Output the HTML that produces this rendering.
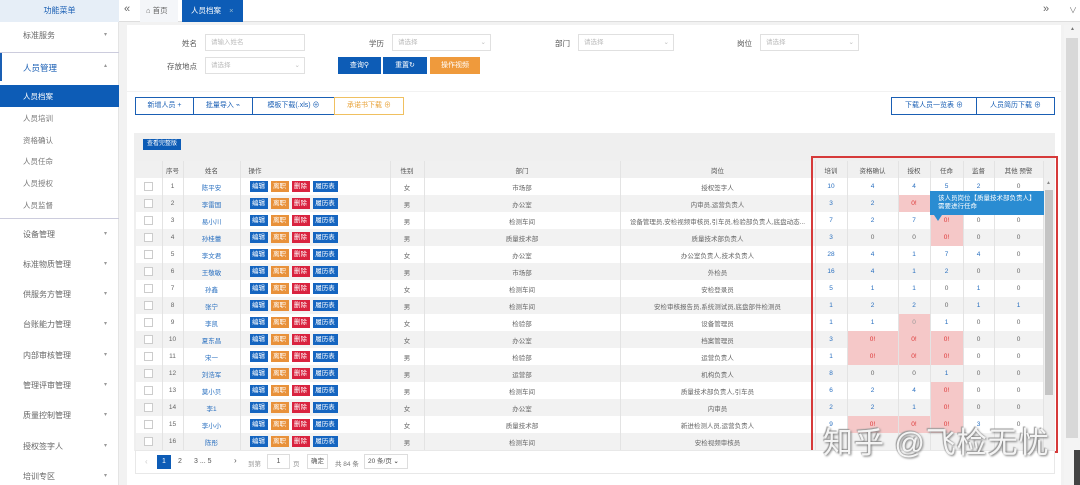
<!DOCTYPE html>
<html><head><meta charset="utf-8">
<style>
*{box-sizing:border-box;margin:0;padding:0}
body{width:1080px;height:485px;overflow:hidden;background:#fff;font-family:"Liberation Sans","Noto Sans CJK SC",sans-serif;position:relative;color:#555}
.a{position:absolute}
.side{left:0;top:0;width:119px;height:485px;background:#fff;border-right:1px solid #e4e4e4}
.sh{left:0;top:0;width:119px;height:22px;background:#e6eef7;color:#1a5fb4;font-size:8px;text-align:center;line-height:22px}
.mi{left:23px;font-size:8px;color:#666}
.car{left:104px;font-size:6px;color:#999}
.si{left:23px;font-size:7.5px;color:#777}
.gray{left:119px;top:22px;width:961px;height:463px;background:#f2f2f2}
.tabbar{left:119px;top:0;width:961px;height:22px;background:#fff;border-bottom:1px solid #ddd}
.inp{height:17px;border:1px solid #e0e0e0;background:#fff;font-size:6.5px;color:#bbb;padding-left:5px;line-height:15px}
.lbl{font-size:7.5px;color:#555;text-align:right}
.btn{height:17px;font-size:7px;color:#fff;text-align:center;line-height:17px}
.ob{height:18px;border:1px solid #1a5fb4;background:#fff;color:#1a5fb4;font-size:7px;text-align:center;line-height:16px}
table{border-collapse:collapse;table-layout:fixed;font-size:6.5px}
td{height:17px;text-align:center;color:#666;border-right:1px solid #e3e3e3;white-space:nowrap;overflow:hidden;padding:0}
tr:nth-child(even) td{background:#f2f2f2}
tr:nth-child(odd) td{background:#fff}
tr.h td{background:#f0f0f0;color:#555}
.cb{display:inline-block;width:9px;height:9px;border:1px solid #ccc;background:#fff;vertical-align:middle}
.nm{color:#2a70c0}
.bl{color:#2a70c0}
td.pk{background:#f5c8c8 !important;color:#d33}
.ops{text-align:left;padding-left:9px}
.ops i{font-style:normal;display:inline-block;height:11px;line-height:11px;color:#fff;font-size:6.5px;width:18px;text-align:center;margin-right:3px;vertical-align:middle}
.ops i:last-child{width:25px}
.e{background:#1565c0}.l{background:#e8913a}.d{background:#d9233f}
</style></head><body>
<div class="a side"></div>
<div class="a sh">功能菜单</div>
<div class="a mi" style="top:30px">标准服务</div><div class="a car" style="top:31px">▾</div>
<div class="a" style="left:0;top:52px;width:119px;height:1px;background:#ccd"></div>
<div class="a" style="left:0;top:53px;width:2px;height:28px;background:#1a5fb4"></div>
<div class="a mi" style="top:62px;color:#1a5fb4;font-size:8.5px">人员管理</div><div class="a car" style="top:62px">▴</div>
<div class="a" style="left:0;top:85px;width:119px;height:22px;background:#0d5cb6"></div>
<div class="a si" style="top:91px;color:#fff">人员档案</div>
<div class="a si" style="top:113px">人员培训</div>
<div class="a si" style="top:135px">资格确认</div>
<div class="a si" style="top:156px">人员任命</div>
<div class="a si" style="top:178px">人员授权</div>
<div class="a si" style="top:200px">人员监督</div>
<div class="a" style="left:0;top:218px;width:119px;height:1px;background:#ccd"></div>
<div class="a mi" style="top:229px">设备管理</div><div class="a car" style="top:230px">▾</div>
<div class="a mi" style="top:259px">标准物质管理</div><div class="a car" style="top:260px">▾</div>
<div class="a mi" style="top:289px">供服务方管理</div><div class="a car" style="top:290px">▾</div>
<div class="a mi" style="top:319px">台账能力管理</div><div class="a car" style="top:320px">▾</div>
<div class="a mi" style="top:350px">内部审核管理</div><div class="a car" style="top:351px">▾</div>
<div class="a mi" style="top:380px">管理评审管理</div><div class="a car" style="top:381px">▾</div>
<div class="a mi" style="top:410px">质量控制管理</div><div class="a car" style="top:411px">▾</div>
<div class="a mi" style="top:441px">授权签字人</div><div class="a car" style="top:442px">▾</div>
<div class="a mi" style="top:471px">培训专区</div><div class="a car" style="top:472px">▾</div>

<div class="a gray"></div>
<div class="a tabbar"></div>
<div class="a" style="left:124px;top:3px;font-size:11px;color:#666">«</div>
<div class="a" style="left:140px;top:0;width:38px;height:22px;background:#f4f6f9;font-size:7.5px;color:#666;line-height:22px;padding-left:6px">⌂ 首页</div>
<div class="a" style="left:182px;top:0;width:61px;height:22px;background:#0d5cb6;font-size:7.5px;color:#fff;line-height:22px;padding-left:9px">人员档案 <span style="color:#9bc;margin-left:6px">×</span></div>
<div class="a" style="left:1043px;top:3px;font-size:11px;color:#666">»</div>
<div class="a" style="left:1069px;top:5px;font-size:8px;color:#777">∨</div>

<div class="a" style="left:127px;top:25px;width:934px;height:66px;background:#fff"></div>
<div class="a lbl" style="left:160px;top:38px;width:37px">姓名</div>
<div class="a inp" style="left:205px;top:34px;width:100px">请输入姓名</div>
<div class="a lbl" style="left:350px;top:38px;width:34px">学历</div>
<div class="a inp" style="left:392px;top:34px;width:99px">请选择<span style="float:right;margin-right:4px">⌄</span></div>
<div class="a lbl" style="left:535px;top:38px;width:35px">部门</div>
<div class="a inp" style="left:578px;top:34px;width:96px">请选择<span style="float:right;margin-right:4px">⌄</span></div>
<div class="a lbl" style="left:715px;top:38px;width:37px">岗位</div>
<div class="a inp" style="left:760px;top:34px;width:99px">请选择<span style="float:right;margin-right:4px">⌄</span></div>
<div class="a lbl" style="left:150px;top:61px;width:47px">存放地点</div>
<div class="a inp" style="left:205px;top:57px;width:100px">请选择<span style="float:right;margin-right:4px">⌄</span></div>
<div class="a btn" style="left:338px;top:57px;width:43px;background:#0d5cb6">查询⚲</div>
<div class="a btn" style="left:383px;top:57px;width:44px;background:#0d5cb6">重置↻</div>
<div class="a btn" style="left:430px;top:57px;width:50px;background:#ef9a3c">操作视频</div>

<div class="a" style="left:127px;top:92px;width:934px;height:393px;background:#fff"></div>
<div class="a ob" style="left:135px;top:97px;width:59px">新增人员 +</div>
<div class="a ob" style="left:193px;top:97px;width:60px">批量导入 ⌁</div>
<div class="a ob" style="left:252px;top:97px;width:83px">模板下载(.xls) ⊕</div>
<div class="a ob" style="left:334px;top:97px;width:70px;border-color:#f0c060;color:#e8a33a">承诺书下载 ⊕</div>
<div class="a ob" style="left:891px;top:97px;width:86px">下载人员一览表 ⊕</div>
<div class="a ob" style="left:976px;top:97px;width:79px">人员简历下载 ⊕</div>

<div class="a" style="left:134px;top:133px;width:921px;height:318px;background:#efefef"></div>
<div class="a" style="left:143px;top:139px;width:38px;height:11px;background:#0d5cb6;color:#fff;font-size:6px;text-align:center;line-height:11px">查看完整版</div>

<div class="a" style="left:136px;top:161px;width:908px;height:289px;overflow:hidden">
<table style="width:907px">
<colgroup><col style="width:26px"><col style="width:21px"><col style="width:57px"><col style="width:150px"><col style="width:34px"><col style="width:196px"><col style="width:195px"><col style="width:32px"><col style="width:51px"><col style="width:32px"><col style="width:33px"><col style="width:31px"><col style="width:49px"></colgroup>
<tr class="h"><td></td><td>序号</td><td>姓名</td><td style="text-align:left;padding-left:8px">操作</td><td>性别</td><td>部门</td><td>岗位</td><td>培训</td><td>资格确认</td><td>授权</td><td>任命</td><td>监督</td><td>其他 预警</td></tr>
</table>
<table style="width:907px" id="tb">
<colgroup><col style="width:26px"><col style="width:21px"><col style="width:57px"><col style="width:150px"><col style="width:34px"><col style="width:196px"><col style="width:195px"><col style="width:32px"><col style="width:51px"><col style="width:32px"><col style="width:33px"><col style="width:31px"><col style="width:49px"></colgroup>
<tr><td><span class="cb"></span></td><td>1</td><td class="nm">陈平安</td><td class="ops"><i class="e">编辑</i><i class="l">离职</i><i class="d">删除</i><i class="e">履历表</i></td><td>女</td><td>市场部</td><td>授权签字人</td><td class="bl">10</td><td class="bl">4</td><td class="bl">4</td><td class="bl">5</td><td class="bl">2</td><td>0</td></tr>
<tr><td><span class="cb"></span></td><td>2</td><td class="nm">李雷国</td><td class="ops"><i class="e">编辑</i><i class="l">离职</i><i class="d">删除</i><i class="e">履历表</i></td><td>男</td><td>办公室</td><td>内审员,运营负责人</td><td class="bl">3</td><td class="bl">2</td><td class="pk">0!</td><td class="pk">0!</td><td>0</td><td>0</td></tr>
<tr><td><span class="cb"></span></td><td>3</td><td class="nm">易小川</td><td class="ops"><i class="e">编辑</i><i class="l">离职</i><i class="d">删除</i><i class="e">履历表</i></td><td>男</td><td>检测车间</td><td>设备管理员,安检视频审核员,引车员,检验部负责人,底盘动态...</td><td class="bl">7</td><td class="bl">2</td><td class="bl">7</td><td class="pk">0!</td><td>0</td><td>0</td></tr>
<tr><td><span class="cb"></span></td><td>4</td><td class="nm">孙桂蕾</td><td class="ops"><i class="e">编辑</i><i class="l">离职</i><i class="d">删除</i><i class="e">履历表</i></td><td>男</td><td>质量技术部</td><td>质量技术部负责人</td><td class="bl">3</td><td>0</td><td>0</td><td class="pk">0!</td><td>0</td><td>0</td></tr>
<tr><td><span class="cb"></span></td><td>5</td><td class="nm">李文君</td><td class="ops"><i class="e">编辑</i><i class="l">离职</i><i class="d">删除</i><i class="e">履历表</i></td><td>女</td><td>办公室</td><td>办公室负责人,技术负责人</td><td class="bl">28</td><td class="bl">4</td><td class="bl">1</td><td class="bl">7</td><td class="bl">4</td><td>0</td></tr>
<tr><td><span class="cb"></span></td><td>6</td><td class="nm">王敬敏</td><td class="ops"><i class="e">编辑</i><i class="l">离职</i><i class="d">删除</i><i class="e">履历表</i></td><td>男</td><td>市场部</td><td>外检员</td><td class="bl">16</td><td class="bl">4</td><td class="bl">1</td><td class="bl">2</td><td>0</td><td>0</td></tr>
<tr><td><span class="cb"></span></td><td>7</td><td class="nm">孙鑫</td><td class="ops"><i class="e">编辑</i><i class="l">离职</i><i class="d">删除</i><i class="e">履历表</i></td><td>女</td><td>检测车间</td><td>安检登录员</td><td class="bl">5</td><td class="bl">1</td><td class="bl">1</td><td>0</td><td class="bl">1</td><td>0</td></tr>
<tr><td><span class="cb"></span></td><td>8</td><td class="nm">张宁</td><td class="ops"><i class="e">编辑</i><i class="l">离职</i><i class="d">删除</i><i class="e">履历表</i></td><td>男</td><td>检测车间</td><td>安检审核报告员,系统测试员,底盘部件检测员</td><td class="bl">1</td><td class="bl">2</td><td class="bl">2</td><td>0</td><td class="bl">1</td><td class="bl">1</td></tr>
<tr><td><span class="cb"></span></td><td>9</td><td class="nm">李凯</td><td class="ops"><i class="e">编辑</i><i class="l">离职</i><i class="d">删除</i><i class="e">履历表</i></td><td>女</td><td>检验部</td><td>设备管理员</td><td class="bl">1</td><td class="bl">1</td><td class="pk" style="color:#999">0</td><td class="bl">1</td><td>0</td><td>0</td></tr>
<tr><td><span class="cb"></span></td><td>10</td><td class="nm">夏东昌</td><td class="ops"><i class="e">编辑</i><i class="l">离职</i><i class="d">删除</i><i class="e">履历表</i></td><td>女</td><td>办公室</td><td>档案管理员</td><td class="bl">3</td><td class="pk">0!</td><td class="pk">0!</td><td class="pk">0!</td><td>0</td><td>0</td></tr>
<tr><td><span class="cb"></span></td><td>11</td><td class="nm">宋一</td><td class="ops"><i class="e">编辑</i><i class="l">离职</i><i class="d">删除</i><i class="e">履历表</i></td><td>男</td><td>检验部</td><td>运营负责人</td><td class="bl">1</td><td class="pk">0!</td><td class="pk">0!</td><td class="pk">0!</td><td>0</td><td>0</td></tr>
<tr><td><span class="cb"></span></td><td>12</td><td class="nm">刘浩军</td><td class="ops"><i class="e">编辑</i><i class="l">离职</i><i class="d">删除</i><i class="e">履历表</i></td><td>男</td><td>运营部</td><td>机构负责人</td><td class="bl">8</td><td>0</td><td>0</td><td class="bl">1</td><td>0</td><td>0</td></tr>
<tr><td><span class="cb"></span></td><td>13</td><td class="nm">莫小贝</td><td class="ops"><i class="e">编辑</i><i class="l">离职</i><i class="d">删除</i><i class="e">履历表</i></td><td>男</td><td>检测车间</td><td>质量技术部负责人,引车员</td><td class="bl">6</td><td class="bl">2</td><td class="bl">4</td><td class="pk">0!</td><td>0</td><td>0</td></tr>
<tr><td><span class="cb"></span></td><td>14</td><td class="nm">李1</td><td class="ops"><i class="e">编辑</i><i class="l">离职</i><i class="d">删除</i><i class="e">履历表</i></td><td>女</td><td>办公室</td><td>内审员</td><td class="bl">2</td><td class="bl">2</td><td class="bl">1</td><td class="pk">0!</td><td>0</td><td>0</td></tr>
<tr><td><span class="cb"></span></td><td>15</td><td class="nm">李小小</td><td class="ops"><i class="e">编辑</i><i class="l">离职</i><i class="d">删除</i><i class="e">履历表</i></td><td>女</td><td>质量技术部</td><td>新进检测人员,运营负责人</td><td class="bl">9</td><td class="pk">0!</td><td class="pk">0!</td><td class="pk">0!</td><td class="bl">3</td><td>0</td></tr>
<tr><td><span class="cb"></span></td><td>16</td><td class="nm">陈彤</td><td class="ops"><i class="e">编辑</i><i class="l">离职</i><i class="d">删除</i><i class="e">履历表</i></td><td>男</td><td>检测车间</td><td>安检视频审核员</td><td></td><td></td><td></td><td></td><td></td><td></td></tr>
<tr><td><span class="cb"></span></td><td>17</td><td class="nm"></td><td class="ops"><i class="e">编辑</i><i class="l">离职</i><i class="d">删除</i><i class="e">履历表</i></td><td></td><td></td><td></td><td></td><td></td><td></td><td></td><td></td><td></td></tr>
</table>
</div>
<div class="a" style="left:1044px;top:178px;width:10px;height:272px;background:#f0f0f0"></div>
<div class="a" style="left:1045px;top:190px;width:8px;height:205px;background:#c4c4c4"></div>
<div class="a" style="left:1046px;top:180px;font-size:5px;color:#888">▲</div>

<div class="a" style="left:930px;top:191px;width:114px;height:24px;background:#2a8cd2;color:#fff;font-size:6.5px;padding:4px 8px;line-height:8px">该人员岗位【质量技术部负责人】<br>需要进行任命</div>
<div class="a" style="left:934px;top:215px;width:0;height:0;border-left:4px solid transparent;border-right:4px solid transparent;border-top:6px solid #2a8cd2"></div>

<div class="a" style="left:811px;top:156px;width:247px;height:297px;border:2px solid #d63a3a"></div>

<div class="a" style="left:135px;top:450px;width:920px;height:24px;background:#fff;border:1px solid #e8e8e8"></div>
<div class="a" style="left:145px;top:457px;font-size:8px;color:#ccc">‹</div>
<div class="a" style="left:157px;top:455px;width:14px;height:14px;background:#0d5cb6;color:#fff;font-size:7px;text-align:center;line-height:14px">1</div>
<div class="a" style="left:178px;top:458px;font-size:7px;color:#555">2</div>
<div class="a" style="left:194px;top:458px;font-size:7px;color:#555">3 ... 5</div>
<div class="a" style="left:234px;top:456px;font-size:8px;color:#555">›</div>
<div class="a" style="left:248px;top:458px;font-size:6.5px;color:#999">到第</div>
<div class="a" style="left:267px;top:454px;width:23px;height:15px;border:1px solid #ddd;font-size:7px;text-align:center;line-height:13px;color:#555">1</div>
<div class="a" style="left:293px;top:458px;font-size:6.5px;color:#999">页</div>
<div class="a" style="left:307px;top:454px;width:21px;height:15px;border:1px solid #ddd;font-size:6.5px;text-align:center;line-height:13px;color:#555">确定</div>
<div class="a" style="left:335px;top:458px;font-size:6.5px;color:#777">共 84 条</div>
<div class="a" style="left:364px;top:454px;width:44px;height:15px;border:1px solid #ddd;font-size:6.5px;line-height:13px;color:#555;padding-left:3px">20 条/页 <b style="font-size:6px">⌄</b></div>

<div class="a" style="left:823px;top:418px;font-size:30px;color:#f4f4f4;text-shadow:1px 1px 2px #777,-1px -1px 1px #999;letter-spacing:1px;white-space:nowrap">知乎 @飞检无忧</div>

<div class="a" style="left:1064px;top:25px;width:16px;height:460px;background:#f4f4f4"></div>
<div class="a" style="left:1070px;top:26px;font-size:5px;color:#777">▲</div>
<div class="a" style="left:1066px;top:38px;width:12px;height:400px;background:#d8d8d8"></div>
<div class="a" style="left:1074px;top:450px;width:6px;height:35px;background:#444"></div>
</body></html>
